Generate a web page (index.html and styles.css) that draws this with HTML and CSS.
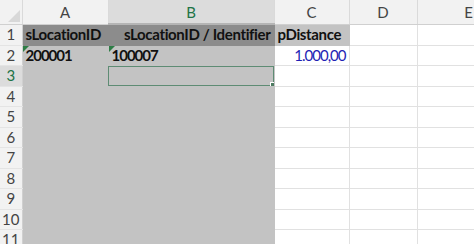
FILE: index.html
```html
<!DOCTYPE html>
<html lang="en">
<head>
    <meta charset="UTF-8">
    <title>Sheet1</title>
    <link rel="stylesheet" href="styles.css">
</head>
<body>
    <table class="sheet">
        <colgroup>
            <col class="col-rowhead">
            <col class="col-a">
            <col class="col-b">
            <col class="col-c">
            <col class="col-d">
            <col class="col-e">
        </colgroup>
        <thead>
            <tr>
                <th class="corner"><span class="corner-mark"></span></th>
                <th>A</th>
                <th class="active-col">B</th>
                <th>C</th>
                <th>D</th>
                <th>E</th>
            </tr>
        </thead>
        <tbody>
            <tr>
                <td class="rowhead">1</td>
                <td class="fill-dark bold">sLocationID</td>
                <td class="fill-dark bold right">sLocationID / Identifier</td>
                <td class="fill-light bold">pDistance</td>
                <td></td>
                <td></td>
            </tr>
            <tr>
                <td class="rowhead">2</td>
                <td class="fill-gray bold digits flag">200001</td>
                <td class="fill-gray bold digits flag">100007</td>
                <td class="number digits">1.000,00</td>
                <td></td>
                <td></td>
            </tr>
            <tr>
                <td class="rowhead active-row">3</td>
                <td class="fill-gray"></td>
                <td class="fill-gray selected"><span class="handle"></span></td>
                <td></td>
                <td></td>
                <td></td>
            </tr>
            <tr><td class="rowhead">4</td><td class="fill-gray"></td><td class="fill-gray"></td><td></td><td></td><td></td></tr>
            <tr><td class="rowhead">5</td><td class="fill-gray"></td><td class="fill-gray"></td><td></td><td></td><td></td></tr>
            <tr><td class="rowhead">6</td><td class="fill-gray"></td><td class="fill-gray"></td><td></td><td></td><td></td></tr>
            <tr><td class="rowhead">7</td><td class="fill-gray"></td><td class="fill-gray"></td><td></td><td></td><td></td></tr>
            <tr><td class="rowhead">8</td><td class="fill-gray"></td><td class="fill-gray"></td><td></td><td></td><td></td></tr>
            <tr><td class="rowhead">9</td><td class="fill-gray"></td><td class="fill-gray"></td><td></td><td></td><td></td></tr>
            <tr><td class="rowhead">10</td><td class="fill-gray"></td><td class="fill-gray"></td><td></td><td></td><td></td></tr>
            <tr><td class="rowhead">11</td><td class="fill-gray"></td><td class="fill-gray"></td><td></td><td></td><td></td></tr>
        </tbody>
    </table>
</body>
</html>
```

FILE: styles.css
```css
body {
    margin: 0;
    background: #fff;
    overflow: hidden;
    font-family: Lato, 'Liberation Sans', Arial, sans-serif;
}
.sheet {
    border-collapse: collapse;
    table-layout: fixed;
    width: 520px;
    font-size: 15px;
    color: #111;
}
.col-rowhead { width: 22px; }
.col-a { width: 86px; }
.col-b { width: 166px; }
.col-c { width: 75px; }
.col-d { width: 68px; }
.col-e { width: 103px; }
th {
    height: 23px;
    padding: 0;
    background: #f2f2f2;
    border-right: 1px solid #dadada;
    border-bottom: 1px solid #d0d0d0;
    font-weight: normal;
    color: #444;
    text-align: center;
}
th.active-col {
    background: #dcdcdc;
    color: #217346;
    border-bottom: 2px solid #b5b5b5;
}
.corner {
    position: relative;
}
.corner-mark {
    position: absolute;
    right: 2px;
    bottom: 2px;
    width: 0;
    height: 0;
    border-left: 12px solid transparent;
    border-bottom: 12px solid #d8d8d8;
}
td {
    height: 19.5px;
    padding: 0 3px;
    border-right: 1px solid #e1e1e1;
    border-bottom: 1px solid #e1e1e1;
    white-space: nowrap;
    overflow: hidden;
    line-height: 19px;
}
td.rowhead {
    padding: 0;
    background: #f2f2f2;
    border-right: 1px solid #d0d0d0;
    border-bottom-color: #e4e4e4;
    color: #444;
    text-align: center;
}
td.active-row {
    background: #dcdcdc;
    color: #217346;
}
.fill-dark {
    background: #8c8c8c;
    border-color: #8c8c8c;
}
.fill-light {
    background: #c3c3c3;
    border-color: #c3c3c3;
}
.fill-gray {
    background: #c3c3c3;
    border-color: #c3c3c3;
}
.bold {
    font-weight: bold;
    letter-spacing: -0.35px;
}
.right { text-align: right; }
/* calibri-ish narrow figures */
.digits { letter-spacing: -1px; }
.number {
    text-align: right;
    color: #1f1fb4;
}
.flag {
    position: relative;
}
.flag::before {
    content: "";
    position: absolute;
    left: 0;
    top: 0;
    border-top: 6px solid #2e7d46;
    border-right: 6px solid transparent;
}
.selected {
    position: relative;
    outline: 1px solid #5e8c74;
    outline-offset: -1px;
}
.handle {
    position: absolute;
    right: -3px;
    bottom: -3px;
    width: 5px;
    height: 5px;
    background: #4d7b61;
    border: 1px solid #fff;
}
```
